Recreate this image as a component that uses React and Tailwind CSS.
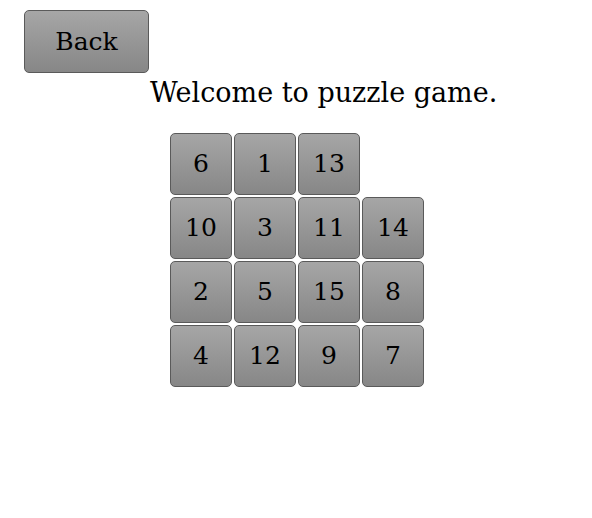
const rows = [
  [6, 1, 13, null],
  [10, 3, 11, 14],
  [2, 5, 15, 8],
  [4, 12, 9, 7],
]

function Tile({ value }) {
  if (value === null) return <div className="w-[62px] h-[62px]" />
  return (
    <button className="w-[62px] h-[62px] rounded-[5px] border border-[#5a5a5a] bg-gradient-to-b from-[#a6a6a6] to-[#878787] text-[25px] text-black flex items-center justify-center">
      {value}
    </button>
  )
}

export default function App() {
  return (
    <div
      className="w-[592px] h-[518px] bg-white text-black pl-6 pt-[10px]"
      style={{ fontFamily: '"DejaVu Serif", serif' }}
    >
      <button className="block w-[125px] h-[63px] rounded-[5px] border border-[#5a5a5a] bg-gradient-to-b from-[#a6a6a6] to-[#878787] text-[25px] flex items-center justify-center">
        Back
      </button>
      <h1 className="ml-[126px] mt-0 text-[27px] leading-[40px]">Welcome to puzzle game.</h1>
      {/* board */}
      <div className="ml-[146px] mt-[20px] grid grid-cols-[repeat(4,62px)] gap-[2px]">
        {rows.flat().map((v, i) => (
          <Tile key={i} value={v} />
        ))}
      </div>
    </div>
  )
}
